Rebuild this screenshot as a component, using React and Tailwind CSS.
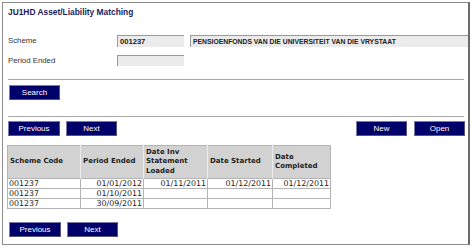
import React from "react";

const btn =
  "h-[15px] bg-[#00006b] border border-[#7c7ca8] border-r-[#55557a] border-b-[#55557a] text-white text-[8px] leading-[13px] text-center font-['Liberation_Sans',Arial,sans-serif]";

function Btn({ w, children, className = "" }) {
  return (
    <div className={`${btn} ${className}`} style={{ width: w }}>
      {children}
    </div>
  );
}

const rows = [
  ["001237", "01/01/2012", "01/11/2011", "01/12/2011", "01/12/2011"],
  ["001237", "01/10/2011", "", "", ""],
  ["001237", "30/09/2011", "", "", ""],
];

export default function App() {
  return (
    <div className="w-[474px] h-[248px] bg-white overflow-hidden font-['Liberation_Sans',Arial,sans-serif]">
      <div className="ml-[2px] mt-[2px] w-[468px] h-[243px] border border-[#8c8c8c] border-r-[#6a6a6a] border-r-2 flex flex-col">
        <div className="pt-[5px] pl-[5px] h-[14px] leading-[9px] text-[8.4px] font-bold text-[#1c1c5e] whitespace-nowrap">
          JU1HD Asset/Liability Matching
        </div>
        {/* Scheme row */}
        <div className="mt-[18px] flex items-center h-[12px] pl-[5px]">
          <div className="w-[109px] text-[7.8px] text-[#333] leading-[12px]">Scheme</div>
          <div className="w-[67px] h-[12px] bg-[#ebebeb] border-t border-l border-[#9a9a9a] pl-[2px] text-[7.6px] font-bold text-[#222] leading-[11px]">
            001237
          </div>
          <div className="ml-[6px] w-[278px] h-[12px] bg-[#ebebeb] border-t border-l border-[#9a9a9a] pl-[2px] text-[6.8px] font-bold text-[#222] leading-[11px] whitespace-nowrap">
            PENSIOENFONDS VAN DIE UNIVERSITEIT VAN DIE VRYSTAAT
          </div>
        </div>
        {/* Period row */}
        <div className="mt-[8px] flex items-center h-[11px] pl-[5px]">
          <div className="w-[109px] text-[7.8px] text-[#333] leading-[11px]">Period Ended</div>
          <div className="w-[67px] h-[11px] bg-[#ebebeb] border-t border-l border-[#9a9a9a]" />
        </div>
        <div className="mt-[13px] ml-[5px] w-[456px] h-px bg-[#a8a8a8]" />
        <div className="mt-[5px] ml-[6px]">
          <Btn w="51px">Search</Btn>
        </div>
        <div className="mt-[16px] ml-[5px] w-[456px] h-px bg-[#a8a8a8]" />
        <div className="mt-[4px] flex items-center pl-[5px]">
          <Btn w="52px">Previous</Btn>
          <Btn w="51px" className="ml-[6px]">Next</Btn>
          <Btn w="51px" className="ml-[239px]">New</Btn>
          <Btn w="51px" className="ml-[7px]">Open</Btn>
        </div>
        <div className="mt-[9px] ml-[4px]">
          <table className="border-collapse border border-[#b4b4b4] font-['DejaVu_Sans',Verdana,sans-serif] text-[#222]">
            <thead>
              <tr className="h-[33px] bg-[#d2d2d2] text-[7px] font-bold leading-[9.5px]">
                <th className="w-[73px] text-left align-middle pl-[2px] border-r border-[#ececec]">Scheme Code</th>
                <th className="w-[63px] text-left align-middle pl-[2px] border-r border-[#ececec]">Period Ended</th>
                <th className="w-[64px] text-left align-middle pl-[2px] border-r border-[#ececec]">
                  Date Inv
                  <br />
                  Statement
                  <br />
                  Loaded
                </th>
                <th className="w-[65px] text-left align-middle pl-[2px] border-r border-[#ececec]">Date Started</th>
                <th className="w-[58px] text-left align-middle pl-[2px]">
                  Date
                  <br />
                  Completed
                </th>
              </tr>
            </thead>
            <tbody>
              {rows.map((r, i) => (
                <tr key={i} className="h-[10px] text-[7.9px] leading-[9px] bg-white">
                  <td className="border border-[#b4b4b4] pl-[1px] p-0">{r[0]}</td>
                  <td className="border border-[#b4b4b4] pr-[1px] text-right p-0">{r[1]}</td>
                  <td className="border border-[#b4b4b4] pr-[1px] text-right p-0">{r[2]}</td>
                  <td className="border border-[#b4b4b4] pr-[1px] text-right p-0">{r[3]}</td>
                  <td className="border border-[#b4b4b4] pr-[1px] text-right p-0">{r[4]}</td>
                </tr>
              ))}
            </tbody>
          </table>
        </div>
        <div className="mt-[13px] flex items-center pl-[6px]">
          <Btn w="52px">Previous</Btn>
          <Btn w="51px" className="ml-[6px]">Next</Btn>
        </div>
      </div>
    </div>
  );
}
